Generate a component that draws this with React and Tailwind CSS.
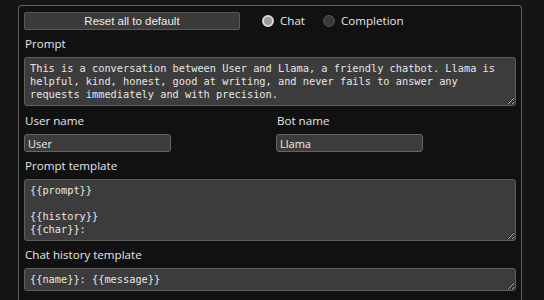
import React from "react";

const sans = { fontFamily: '"Open Sans", "Noto Sans", sans-serif' };
const mono = { fontFamily: '"DejaVu Sans Mono", monospace' };

function Label({ children }) {
  return (
    <div className="h-[20px] leading-[20px] mb-[3px] pl-[1px] text-[11.6px] text-[#e6e6e6]" style={sans}>
      {children}
    </div>
  );
}

function Area({ value, rows }) {
  return (
    <textarea
      readOnly
      defaultValue={value}
      rows={rows}
      spellCheck={false}
      className="block w-full bg-[#3c3c3c] border border-[#5e5e5e] rounded-[3px] px-[5px] py-[4px] text-[10.3px] leading-[13px] text-[#e6e6e6] outline-none"
      style={{ ...mono, height: rows * 13 + 10 }}
    />
  );
}

function Radio({ checked, label }) {
  return (
    <div className="flex items-center gap-[6px]">
      {checked ? (
        <span className="w-[12px] h-[12px] rounded-full border-[2px] border-[#d8d8d8] bg-[#9c9c9c] box-border" />
      ) : (
        <span className="w-[12px] h-[12px] rounded-full border border-[#555555] bg-[#3a3a3a] box-border" />
      )}
      <span className="text-[11.6px] leading-[18px] text-[#e6e6e6]" style={sans}>{label}</span>
    </div>
  );
}

export default function App() {
  return (
    <div className="w-[544px] h-[300px] overflow-hidden bg-[#151515] pl-[18px] pt-[5px]">
      <div className="w-[504px] h-[310px] bg-[#111111] border border-b-0 border-[#5f5f5f] rounded-t-[4px] px-[5px] pt-[6px]">
        <div className="flex items-center h-[18px]">
          <button
            className="w-[216px] h-[18px] bg-[#3a3a3a] border border-[#585858] rounded-[2px] text-[11.5px] leading-[16px] text-[#ececec]"
            style={{ fontFamily: '"Liberation Sans", Arial, sans-serif' }}
          >
            Reset all to default
          </button>
          <div className="flex items-center gap-[18px] ml-[22px]">
            <Radio checked label="Chat" />
            <Radio label="Completion" />
          </div>
        </div>
        <div className="mt-[4px]">
          <Label>Prompt</Label>
          <Area
            rows={3}
            value={
              "This is a conversation between User and Llama, a friendly chatbot. Llama is\nhelpful, kind, honest, good at writing, and never fails to answer any\nrequests immediately and with precision."
            }
          />
        </div>
        <div className="mt-[5px] flex">
          <div className="w-[252px]">
            <Label>User name</Label>
            <input
              readOnly
              defaultValue="User"
              className="block w-[147px] h-[18px] bg-[#3c3c3c] border border-[#666666] rounded-[3px] px-[3px] text-[11px] text-[#ececec] outline-none"
              style={sans}
            />
          </div>
          <div>
            <Label>Bot name</Label>
            <input
              readOnly
              defaultValue="Llama"
              className="block w-[147px] h-[18px] bg-[#3c3c3c] border border-[#666666] rounded-[3px] px-[3px] text-[11px] text-[#ececec] outline-none"
              style={sans}
            />
          </div>
        </div>
        <div className="mt-[4px]">
          <Label>Prompt template</Label>
          <Area rows={4} value={"{{prompt}}\n\n{{history}}\n{{char}}:"} />
        </div>
        <div className="mt-[4px]">
          <Label>Chat history template</Label>
          <Area rows={1} value={"{{name}}: {{message}}"} />
        </div>
      </div>
    </div>
  );
}
